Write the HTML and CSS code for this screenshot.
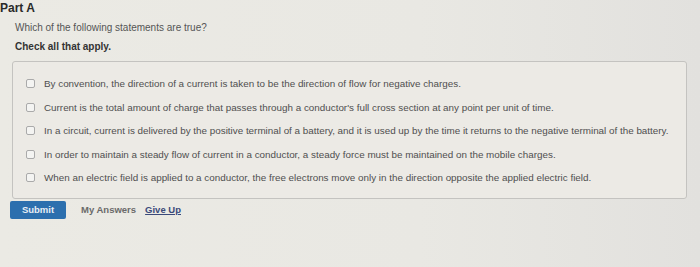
FILE: index.html
```html
<!DOCTYPE html>
<html lang="en">
<head>
	<meta charset="UTF-8">
	<title>Part A</title>
	<link rel="stylesheet" href="styles.css">
</head>
<body>
	<div class="part">
		<h2 class="part-title">Part A</h2>
		<div class="question">
			<p class="prompt">Which of the following statements are true?</p>
			<p class="instruction">Check all that apply.</p>
		</div>
		<ul class="choices">
			<li><span class="box"></span>By convention, the direction of a current is taken to be the direction of flow for negative charges.</li>
			<li><span class="box"></span>Current is the total amount of charge that passes through a conductor's full cross section at any point per unit of time.</li>
			<li><span class="box"></span>In a circuit, current is delivered by the positive terminal of a battery, and it is used up by the time it returns to the negative terminal of the battery.</li>
			<li><span class="box"></span>In order to maintain a steady flow of current in a conductor, a steady force must be maintained on the mobile charges.</li>
			<li><span class="box"></span>When an electric field is applied to a conductor, the free electrons move only in the direction opposite the applied electric field.</li>
		</ul>
		<div class="actions">
			<button class="submit">Submit</button>
			<span class="my-answers">My Answers</span>
			<a class="give-up" href="#">Give Up</a>
		</div>
	</div>
</body>
</html>
```

FILE: styles.css
```css
html,body,div,p,h2,ul,li{
	padding: 0;
	margin: 0;
}
body{
	width: 700px;
	height: 267px;
	overflow: hidden;
	background: linear-gradient(90deg, #ebeae4 0%, #e9e8e3 60%, #e2e1de 100%);
	font-family: "Liberation Sans", Arial, sans-serif;
	color: #4a4a4a;
}
.part{
	padding-top: 1px;
}
.part-title{
	font-size: 12px;
	font-weight: bold;
	color: #2a2a2a;
	line-height: 14px;
}
.question{
	padding: 6px 0 0 15px;
}
.prompt{
	font-size: 10px;
	line-height: 14px;
	color: #555;
}
.instruction{
	margin-top: 5px;
	font-size: 10px;
	font-weight: bold;
	line-height: 14px;
	color: #333;
}
.choices{
	list-style: none;
	margin: 7px 13px 0 12px;
	padding: 10px 0 8px 13px;
	border: 1px solid #c4c3c0;
	border-radius: 3px;
	background: #eceae5;
}
.choices li{
	display: flex;
	align-items: center;
	height: 23.5px;
	font-size: 9.85px;
	color: #4f4f4f;
}
.box{
	width: 7px;
	height: 7px;
	margin-right: 9px;
	border: 1px solid #aaa;
	border-radius: 2px;
	background: #f4f4f2;
}
.actions{
	display: flex;
	align-items: center;
	margin: 2px 0 0 10px;
}
.submit{
	width: 56px;
	height: 18px;
	padding: 0;
	border: 0;
	border-radius: 2px;
	background-color: #2c6fae;
	color: #e8eef5;
	font-family: "Liberation Sans", Arial, sans-serif;
	font-size: 9.5px;
	font-weight: bold;
}
.my-answers{
	margin-left: 15px;
	font-size: 9.5px;
	font-weight: bold;
	color: #6a6a6a;
}
.give-up{
	margin-left: 9px;
	font-size: 9.5px;
	font-weight: bold;
	color: #3b4a7a;
}
```
